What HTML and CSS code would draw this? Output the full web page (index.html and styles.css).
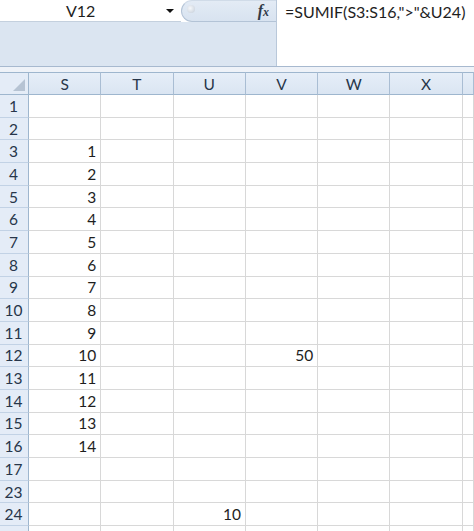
FILE: index.html
```html
<!DOCTYPE html>
<html>
<head>
<meta charset="utf-8">
<link rel="stylesheet" href="styles.css">
</head>
<body>
<div class="top">
  <div class="left">
    <div class="namerow">
      <div class="namebox"><span class="nametext">V12</span><span class="arrow"></span></div>
      <div class="pill"><span class="knob"></span><span class="fx">f<span class="fxx">x</span></span></div>
    </div>
    <div class="leftfill"></div>
  </div>
  <div class="formula">=SUMIF(S3:S16,"&gt;"&amp;U24)</div>
</div>
<div class="gap"></div>
<div class="grid">
  <div class="corner"><span class="tri"></span></div>
  <div class="ch">S</div><div class="ch">T</div><div class="ch">U</div><div class="ch">V</div><div class="ch">W</div><div class="ch">X</div><div class="ch last"></div>

  <div class="rh">1</div><div class="c"></div><div class="c"></div><div class="c"></div><div class="c"></div><div class="c"></div><div class="c"></div><div class="c"></div>
  <div class="rh">2</div><div class="c"></div><div class="c"></div><div class="c"></div><div class="c"></div><div class="c"></div><div class="c"></div><div class="c"></div>
  <div class="rh">3</div><div class="c">1</div><div class="c"></div><div class="c"></div><div class="c"></div><div class="c"></div><div class="c"></div><div class="c"></div>
  <div class="rh">4</div><div class="c">2</div><div class="c"></div><div class="c"></div><div class="c"></div><div class="c"></div><div class="c"></div><div class="c"></div>
  <div class="rh">5</div><div class="c">3</div><div class="c"></div><div class="c"></div><div class="c"></div><div class="c"></div><div class="c"></div><div class="c"></div>
  <div class="rh">6</div><div class="c">4</div><div class="c"></div><div class="c"></div><div class="c"></div><div class="c"></div><div class="c"></div><div class="c"></div>
  <div class="rh">7</div><div class="c">5</div><div class="c"></div><div class="c"></div><div class="c"></div><div class="c"></div><div class="c"></div><div class="c"></div>
  <div class="rh">8</div><div class="c">6</div><div class="c"></div><div class="c"></div><div class="c"></div><div class="c"></div><div class="c"></div><div class="c"></div>
  <div class="rh">9</div><div class="c">7</div><div class="c"></div><div class="c"></div><div class="c"></div><div class="c"></div><div class="c"></div><div class="c"></div>
  <div class="rh">10</div><div class="c">8</div><div class="c"></div><div class="c"></div><div class="c"></div><div class="c"></div><div class="c"></div><div class="c"></div>
  <div class="rh">11</div><div class="c">9</div><div class="c"></div><div class="c"></div><div class="c"></div><div class="c"></div><div class="c"></div><div class="c"></div>
  <div class="rh">12</div><div class="c">10</div><div class="c"></div><div class="c"></div><div class="c">50</div><div class="c"></div><div class="c"></div><div class="c"></div>
  <div class="rh">13</div><div class="c">11</div><div class="c"></div><div class="c"></div><div class="c"></div><div class="c"></div><div class="c"></div><div class="c"></div>
  <div class="rh">14</div><div class="c">12</div><div class="c"></div><div class="c"></div><div class="c"></div><div class="c"></div><div class="c"></div><div class="c"></div>
  <div class="rh">15</div><div class="c">13</div><div class="c"></div><div class="c"></div><div class="c"></div><div class="c"></div><div class="c"></div><div class="c"></div>
  <div class="rh">16</div><div class="c">14</div><div class="c"></div><div class="c"></div><div class="c"></div><div class="c"></div><div class="c"></div><div class="c"></div>
  <div class="rh">17</div><div class="c"></div><div class="c"></div><div class="c"></div><div class="c"></div><div class="c"></div><div class="c"></div><div class="c"></div>
  <div class="rh">23</div><div class="c"></div><div class="c"></div><div class="c"></div><div class="c"></div><div class="c"></div><div class="c"></div><div class="c"></div>
  <div class="rh">24</div><div class="c"></div><div class="c"></div><div class="c">10</div><div class="c"></div><div class="c"></div><div class="c"></div><div class="c"></div>
  <div class="rh"></div><div class="c"></div><div class="c"></div><div class="c"></div><div class="c"></div><div class="c"></div><div class="c"></div><div class="c"></div>
</div>
</body>
</html>
```

FILE: styles.css
```css
html, body {
  margin: 0;
  padding: 0;
  background: #ffffff;
  overflow: hidden;
}
body {
  width: 474px;
  height: 531px;
  font-family: Lato, "Open Sans", sans-serif;
  color: #1e1e1e;
}
.top {
  display: flex;
  height: 66px;
  background: #dbe5f1;
  border-bottom: 1px solid #a7b9cf;
}
.left {
  width: 276px;
  display: flex;
  flex-direction: column;
}
.namerow {
  display: flex;
  height: 22px;
  background: #ffffff;
}
.namebox {
  width: 181px;
  height: 21px;
  background: #ffffff;
  border-bottom: 1px solid #c4d0de;
  position: relative;
}
.nametext {
  position: absolute;
  left: 66px;
  top: 1px;
  font-size: 16px;
  line-height: 20px;
  color: #1e1e1e;
}
.arrow {
  position: absolute;
  left: 166px;
  top: 9px;
  width: 0;
  height: 0;
  border-left: 4px solid transparent;
  border-right: 4px solid transparent;
  border-top: 4px solid #111111;
}
.pill {
  flex: 1;
  height: 20px;
  background: linear-gradient(#e3ebf5, #d8e3f0);
  border: 1px solid #b3c3d6;
  border-right: none;
  border-top-color: #d0dbe8;
  border-radius: 11px 0 0 11px;
  position: relative;
  display: flex;
  align-items: center;
  justify-content: flex-end;
  padding-right: 7px;
}
.knob {
  position: absolute;
  left: 5px;
  top: 4px;
  width: 8px;
  height: 8px;
  border-radius: 50%;
  background: radial-gradient(circle at 40% 40%, #f6f8fb, #c3ccd7);
}
.fx {
  font-family: "Liberation Serif", serif;
  font-style: italic;
  font-weight: bold;
  font-size: 16px;
  color: #303a48;
  line-height: 20px;
}
.fxx {
  font-size: 12px;
}
.leftfill {
  flex: 1;
}
.formula {
  flex: 1;
  background: #ffffff;
  border-left: 1px solid #b9c8da;
  font-size: 16px;
  line-height: 20px;
  padding: 2px 0 0 8px;
  color: #1e1e1e;
  white-space: nowrap;
}
.gap {
  height: 5px;
  background: #eef2f8;
}
.grid {
  display: grid;
  grid-template-columns: 29px repeat(6, 72.3px) 1fr;
  grid-template-rows: 23px repeat(20, 22.7px);
  font-size: 15.5px;
}
.corner {
  background: #e4ecf7;
  border-right: 1px solid #9eb6ce;
  border-bottom: 1px solid #9eb6ce;
  border-top: 1px solid #9eb6ce;
  position: relative;
}
.tri {
  position: absolute;
  right: 3px;
  bottom: 3px;
  width: 0;
  height: 0;
  border-left: 12px solid transparent;
  border-bottom: 12px solid #b6c3d3;
}
.ch {
  background: linear-gradient(#e6eef8, #dae5f2);
  border-right: 1px solid #a9bdd3;
  border-bottom: 1px solid #9eb6ce;
  border-top: 1px solid #9eb6ce;
  display: flex;
  align-items: center;
  justify-content: center;
  color: #27364a;
}
.rh {
  background: #e4ecf7;
  border-right: 1px solid #9eb6ce;
  border-bottom: 1px solid #c2d2e5;
  display: flex;
  align-items: center;
  justify-content: center;
  color: #27364a;
  padding-right: 1px;
}
.c {
  border-right: 1px solid #d8d8d8;
  border-bottom: 1px solid #d8d8d8;
  display: flex;
  align-items: center;
  justify-content: flex-end;
  padding-right: 4px;
  color: #1e1e1e;
}
```
